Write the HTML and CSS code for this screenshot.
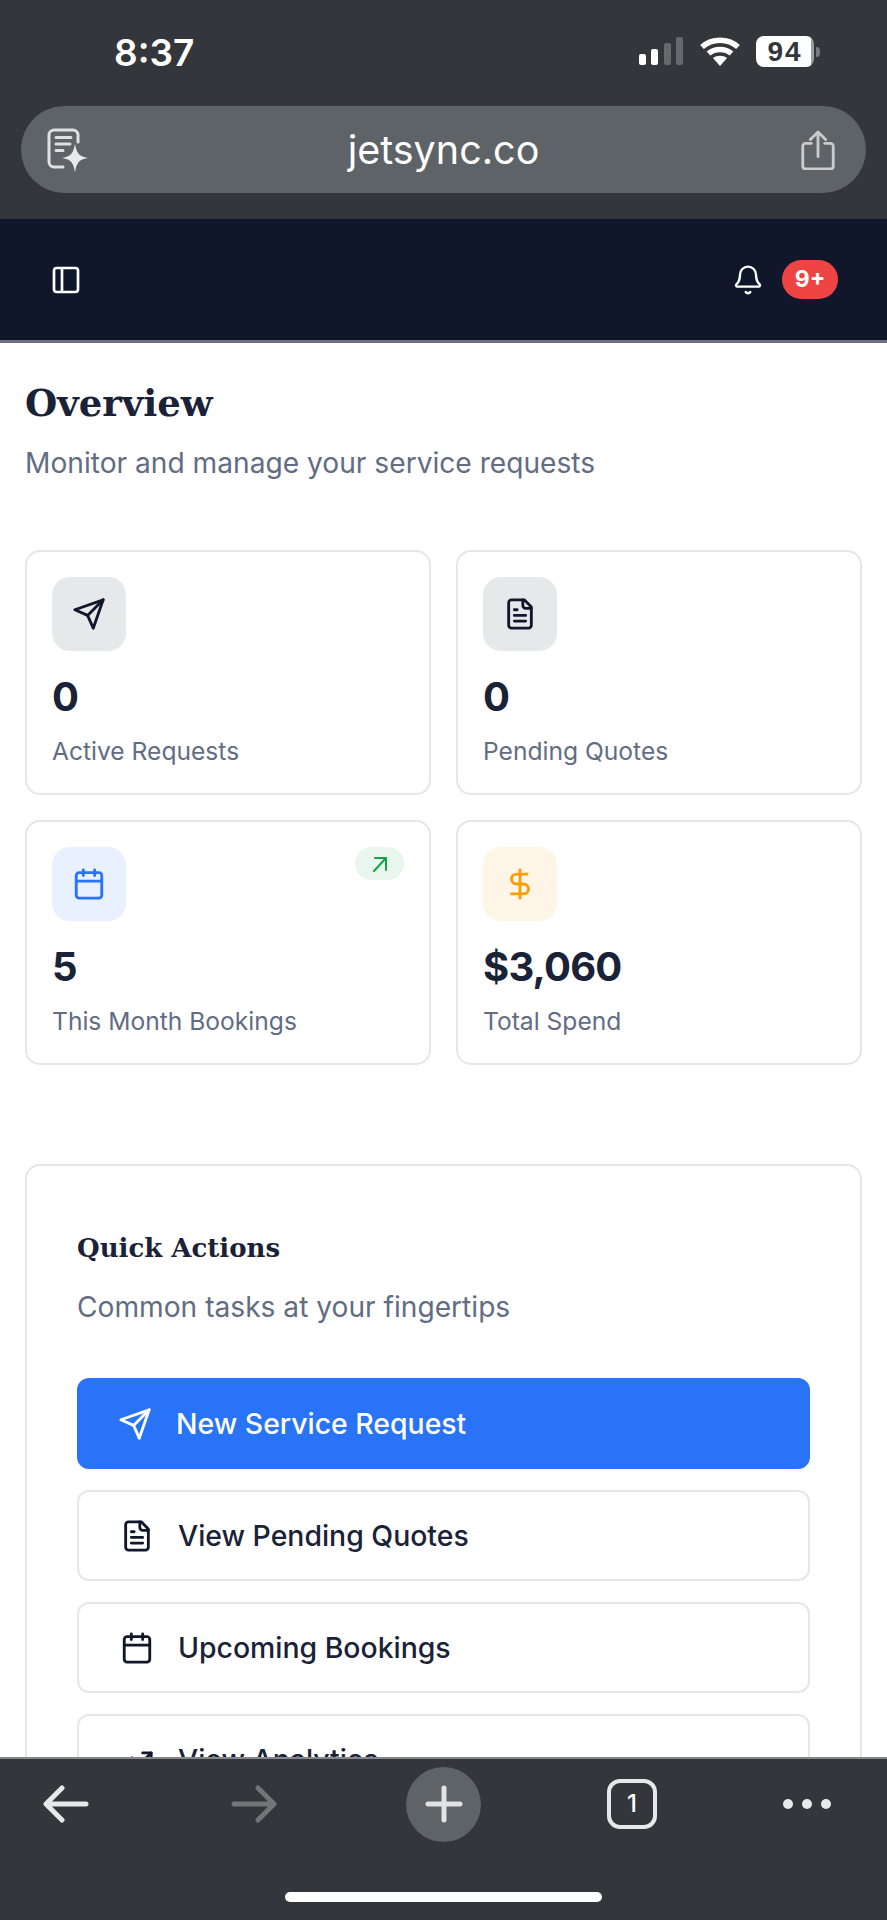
FILE: index.html
```html
<!DOCTYPE html>
<html lang="en">
<head>
<meta charset="utf-8">
<title>JetSync Overview</title>
<link rel="stylesheet" href="styles.css">
</head>
<body>
<div class="screen">
  <header class="chrome-top">
    <div class="status">
      <span class="time">8:37</span>
      <div class="status-icons">
        <svg width="45" height="29" viewBox="0 0 45 29"><rect x="0" y="17" width="7" height="11" rx="2" fill="#fff"/><rect x="12" y="12" width="7" height="16" rx="2" fill="#fff"/><rect x="25" y="6" width="7" height="22" rx="2" fill="#66696c"/><rect x="37" y="0" width="7" height="28" rx="2" fill="#66696c"/></svg>
        <svg width="40" height="30" viewBox="0 0 40 30"><path d="M2 10C12 1 28 1 38 10M8.500 16.500C14.500 11 25.500 11 31.500 16.500" fill="none" stroke="#fff" stroke-width="5.500"/><path d="M13 21C17 18 23 18 27 21L20 29Z" fill="#fff"/></svg>
        <div class="battery"><span class="battery-body">94</span><span class="battery-tip"></span></div>
      </div>
    </div>
    <div class="url-bar">
      <svg width="46" height="48" viewBox="0 0 46 48" fill="none" stroke="#dfe1e2" stroke-width="3" stroke-linecap="round"><path d="M17 41H8a5 5 0 0 1-5-5V9a5 5 0 0 1 5-5h19a5 5 0 0 1 5 5v7"/><path d="M10 11.500h15M10 18h14M10 24.500h7"/><path d="M29 17.500c1.500 9 3.500 13 13 14.500c-9.500 1.500-11.500 5-13 14.500c-1.500-9.500-3.500-13-13-14.500c9.500-1.500 11.500-5.500 13-14.500Z" fill="#e8eaeb" stroke="none"/></svg>
      <span class="url">jetsync.co</span>
      <svg width="36" height="40" viewBox="0 0 36 42" fill="none" stroke="#c9cbcd" stroke-width="3" stroke-linecap="round" stroke-linejoin="round"><path d="M11 14H5a3 3 0 0 0-3 3v21a3 3 0 0 0 3 3h26a3 3 0 0 0 3-3V17a3 3 0 0 0-3-3h-6"/><path d="M18 28V3M10 10l8-8l8 8"/></svg>
    </div>
  </header>

  <nav class="appbar">
    <svg width="32" height="32" viewBox="0 0 24 24" fill="none" stroke="#fff" stroke-width="2" stroke-linejoin="round"><rect x="3" y="3" width="18" height="18" rx="2"/><path d="M9 3v18"/></svg>
    <div class="appbar-right">
      <svg width="32" height="34" viewBox="0 0 24 24" fill="none" stroke="#fff" stroke-width="1.800" stroke-linecap="round" stroke-linejoin="round"><path d="M10.300 21a2 2 0 0 0 3.400 0"/><path d="M3.300 15.300A1 1 0 0 0 4 17h16a1 1 0 0 0 .700-1.700C19.400 14 18 12.500 18 8A6 6 0 0 0 6 8c0 4.500-1.400 6-2.700 7.300"/></svg>
      <span class="notif">9+</span>
    </div>
  </nav>

  <main class="content">
    <h1 class="page-title">Overview</h1>
    <p class="page-sub">Monitor and manage your service requests</p>

    <section class="stats">
      <article class="stat">
        <div class="stat-top">
          <div class="stat-icon tone-grey">
            <svg width="34" height="34" viewBox="0 0 24 24" fill="none" stroke="#10172a" stroke-width="2" stroke-linecap="round" stroke-linejoin="round"><path d="m22 2-7 20-4-9-9-4Z"/><path d="M22 2 11 13"/></svg>
          </div>
        </div>
        <div class="stat-value">0</div>
        <div class="stat-label">Active Requests</div>
      </article>
      <article class="stat">
        <div class="stat-top">
          <div class="stat-icon tone-grey">
            <svg width="34" height="34" viewBox="0 0 24 24" fill="none" stroke="#10172a" stroke-width="2" stroke-linecap="round" stroke-linejoin="round"><path d="M15 2H6a2 2 0 0 0-2 2v16a2 2 0 0 0 2 2h12a2 2 0 0 0 2-2V7Z"/><path d="M14 2v4a2 2 0 0 0 2 2h4M10 9H8M16 13H8M16 17H8"/></svg>
          </div>
        </div>
        <div class="stat-value">0</div>
        <div class="stat-label">Pending Quotes</div>
      </article>
      <article class="stat">
        <div class="stat-top">
          <div class="stat-icon tone-blue">
            <svg width="34" height="34" viewBox="0 0 24 24" fill="none" stroke="#2873f6" stroke-width="2" stroke-linecap="round" stroke-linejoin="round"><rect x="3" y="4" width="18" height="18" rx="2"/><path d="M8 2v4M16 2v4M3 10h18"/></svg>
          </div>
          <div class="trend">
            <svg width="16" height="16" viewBox="0 0 16 16" fill="none" stroke="#16a34a" stroke-width="2" stroke-linecap="round" stroke-linejoin="round"><path d="M3 2h11v12M2 15 14 2"/></svg>
          </div>
        </div>
        <div class="stat-value">5</div>
        <div class="stat-label">This Month Bookings</div>
      </article>
      <article class="stat">
        <div class="stat-top">
          <div class="stat-icon tone-orange">
            <svg width="34" height="34" viewBox="0 0 24 24" fill="none" stroke="#f59e0b" stroke-width="2" stroke-linecap="round" stroke-linejoin="round"><path d="M12 2v20M17 5H9.500a3.500 3.500 0 0 0 0 7h5a3.500 3.500 0 0 1 0 7H6"/></svg>
          </div>
        </div>
        <div class="stat-value">$3,060</div>
        <div class="stat-label">Total Spend</div>
      </article>
    </section>

    <section class="actions">
      <h2 class="actions-title">Quick Actions</h2>
      <p class="actions-sub">Common tasks at your fingertips</p>
      <div class="action-list">
        <a class="action primary">
          <svg width="34" height="34" viewBox="0 0 24 24" fill="none" stroke="#fff" stroke-width="2" stroke-linecap="round" stroke-linejoin="round"><path d="m22 2-7 20-4-9-9-4Z"/><path d="M22 2 11 13"/></svg>
          New Service Request
        </a>
        <a class="action">
          <svg width="34" height="34" viewBox="0 0 24 24" fill="none" stroke="#10172a" stroke-width="2" stroke-linecap="round" stroke-linejoin="round"><path d="M15 2H6a2 2 0 0 0-2 2v16a2 2 0 0 0 2 2h12a2 2 0 0 0 2-2V7Z"/><path d="M14 2v4a2 2 0 0 0 2 2h4M10 9H8M16 13H8M16 17H8"/></svg>
          View Pending Quotes
        </a>
        <a class="action">
          <svg width="34" height="34" viewBox="0 0 24 24" fill="none" stroke="#10172a" stroke-width="2" stroke-linecap="round" stroke-linejoin="round"><rect x="3" y="4" width="18" height="18" rx="2"/><path d="M8 2v4M16 2v4M3 10h18"/></svg>
          Upcoming Bookings
        </a>
        <a class="action">
          <svg width="34" height="34" viewBox="0 0 24 24" fill="none" stroke="#10172a" stroke-width="2" stroke-linecap="round" stroke-linejoin="round"><path d="M22 7 13.500 15.500 8.500 10.500 2 17"/><path d="M16 7h6v6"/></svg>
          View Analytics
        </a>
      </div>
    </section>
  </main>

  <footer class="chrome-bottom">
    <div class="toolbar">
      <svg class="back" width="46" height="38" viewBox="0 0 46 38" fill="none" stroke="#e6e8e9" stroke-width="5" stroke-linecap="round" stroke-linejoin="round"><path d="M43 19H4M19 3 3 19l16 16"/></svg>
      <svg class="forward" width="46" height="38" viewBox="0 0 46 38" fill="none" stroke="#737578" stroke-width="5" stroke-linecap="round" stroke-linejoin="round"><path d="M3 19h39M27 3l16 16-16 16"/></svg>
      <div class="plus">
        <svg width="38" height="38" viewBox="0 0 38 38" fill="none" stroke="#e1e3e4" stroke-width="5" stroke-linecap="round"><path d="M19 3v32M3 19h32"/></svg>
      </div>
      <div class="tabs">1</div>
      <div class="dots"><i></i><i></i><i></i></div>
    </div>
    <div class="home-bar"></div>
  </footer>
</div>
</body>
</html>
```

FILE: styles.css
```css
* { box-sizing: border-box; }
html, body { margin: 0; padding: 0; background: #fff; }
body { font-family: Inter, "Liberation Sans", sans-serif; }
svg { display: block; flex: none; }
.screen { width: 887px; height: 1920px; display: flex; flex-direction: column; overflow: hidden; }

.chrome-top { height: 219px; background: #33363a; padding: 0 21px; flex: none; }
.status { height: 106px; display: flex; justify-content: space-between; align-items: flex-start; padding: 33px 0 0 93px; }
.time { color: #fff; font-size: 37px; font-weight: 600; line-height: 40px; }
.status-icons { display: flex; align-items: center; gap: 16px; padding: 3px 0 0 0; }
.battery { display: flex; align-items: center; gap: 2px; margin-right: 46px; }
.battery-body { width: 58px; height: 31px; border-radius: 8px; background: linear-gradient(90deg, #fff 94%, #9a9c9e 94%); color: #33363a; font-size: 28px; font-weight: 700; line-height: 31px; text-align: center; font-family: "Liberation Sans", sans-serif; letter-spacing: 2px; }
.battery-tip { width: 4px; height: 10px; background: #777a7c; border-radius: 0 4px 4px 0; }
.url-bar { height: 87px; border-radius: 44px; background: #5e6367; display: flex; align-items: center; justify-content: space-between; padding: 0 30px 0 25px; }
.url { color: #fff; font-size: 39.500px; line-height: 48px; margin-right: 5px; }

.appbar { height: 124px; flex: none; background: #10172a; border-bottom: 3px solid #6c7283; display: flex; align-items: center; justify-content: space-between; padding: 0 49px 0 50px; }
.appbar-right { display: flex; align-items: center; gap: 18px; }
.notif { width: 56px; height: 39px; border-radius: 20px; background: #ef4444; color: #fff; font-size: 23px; font-weight: 700; line-height: 39px; text-align: center; }

.content { flex: 1; min-height: 0; overflow: hidden; padding: 35px 25px 0 25px; }
.page-title { margin: 0; font-family: "DejaVu Serif", serif; font-size: 37px; line-height: 50px; font-weight: 700; color: #1a2238; }
.page-sub { margin: 17px 0 0; font-size: 28.150px; line-height: 36px; color: #626c83; }

.stats { margin-top: 69px; display: grid; grid-template-columns: 1fr 1fr; gap: 25px; }
.stat { height: 245px; border: 2px solid #e5e6ea; border-radius: 15px; padding: 25px; display: flex; flex-direction: column; }
.stat-top { display: flex; justify-content: space-between; align-items: flex-start; }
.stat-icon { width: 74px; height: 74px; border-radius: 18px; display: flex; align-items: center; justify-content: center; }
.tone-grey { background: #e7e8ea; }
.tone-blue { background: #e9f1fe; }
.tone-orange { background: #fef5e7; }
.trend { width: 49px; height: 33px; border-radius: 17px; background: #e8f6ed; display: flex; align-items: center; justify-content: center; }
.stat-value { margin-top: 22px; font-size: 40px; line-height: 48px; font-weight: 700; color: #1a2238; letter-spacing: -0.800px; }
.stat-label { margin-top: 14px; font-size: 24.600px; line-height: 32px; color: #626c83; }

.actions { margin-top: 99px; border: 2px solid #e5e6ea; border-radius: 15px; padding: 62px 50px 50px; }
.actions-title { margin: 0; font-family: "DejaVu Serif", serif; font-size: 26px; line-height: 40px; font-weight: 700; color: #1a2238; }
.actions-sub { margin: 21px 0 0; font-size: 28.150px; line-height: 36px; color: #626c83; }
.action-list { margin-top: 53px; display: flex; flex-direction: column; gap: 21px; }
.action { height: 91px; border: 2px solid #e5e6ea; border-radius: 12px; display: flex; align-items: center; gap: 24px; padding: 0 0 0 41px; font-size: 28.400px; font-weight: 500; color: #1a2238; }
.action.primary { background: #2873f6; border-color: #2873f6; color: #fff; padding-left: 39px; gap: 24px; }

.chrome-bottom { height: 163px; flex: none; background: #33363a; border-top: 2px solid #85888b; padding-top: 7px; display: flex; flex-direction: column; align-items: center; }
.toolbar { width: 100%; height: 76px; display: flex; align-items: center; gap: 126px; padding: 0 0 0 43px; }
.back { margin-right: 16px; }
.forward { margin-right: 3px; }
.plus { width: 75px; height: 75px; border-radius: 50%; background: #5e6367; display: flex; align-items: center; justify-content: center; }
.tabs { width: 50px; height: 50px; border: 4px solid #e6e8e9; border-radius: 13px; color: #fff; font-size: 24px; line-height: 42px; text-align: center; font-weight: 500; }
.dots { width: 48px; display: flex; justify-content: space-between; }
.dots i { width: 10px; height: 10px; border-radius: 50%; background: #e6e8e9; display: block; }
.home-bar { width: 317px; height: 10px; border-radius: 5px; background: #fff; margin-top: 50px; }
```
